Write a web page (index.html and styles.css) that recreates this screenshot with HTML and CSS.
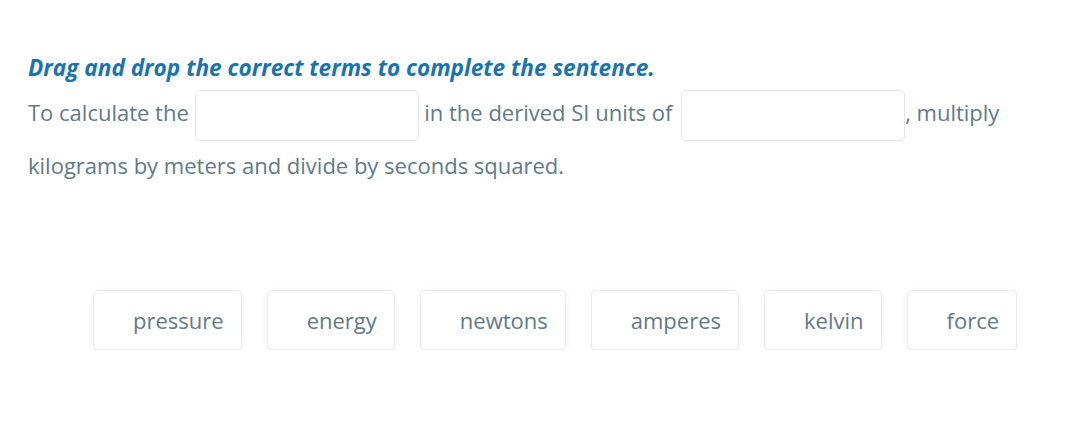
FILE: index.html
```html
<!DOCTYPE html>
<html>
<head>
<meta charset="utf-8">
<link rel="stylesheet" href="styles.css">
</head>
<body>
<div class="question">
  <h2 class="prompt">Drag and drop the correct terms to complete the sentence.</h2>
  <p class="sentence">To calculate the <span class="drop"></span> in the derived SI units of <span class="drop"></span>, multiply kilograms by meters and divide by seconds squared.</p>
  <div class="bank">
    <div class="chip">pressure</div>
    <div class="chip">energy</div>
    <div class="chip">newtons</div>
    <div class="chip">amperes</div>
    <div class="chip">kelvin</div>
    <div class="chip">force</div>
  </div>
</div>
</body>
</html>
```
FILE: styles.css
```css
html, body {
  margin: 0;
  padding: 0;
  background: #ffffff;
}
body {
  font-family: "Open Sans", "Liberation Sans", sans-serif;
  color: #637a86;
}
.question {
  padding: 53px 0 0 28px;
}
.prompt {
  margin: 0;
  font-size: 22.6px;
  font-weight: 700;
  font-style: italic;
  color: #1a73ad;
  line-height: 30px;
}
.sentence {
  margin: 5px 0 0 0;
  font-size: 22px;
  line-height: 49px;
  width: 1000px;
}
.drop {
  display: inline-block;
  width: 222px;
  height: 49px;
  border: 1px solid #e6e6e6;
  border-radius: 5px;
  vertical-align: middle;
  box-sizing: content-box;
}
.drop + .drop,
.sentence .drop:nth-of-type(2) {
  margin-left: 3px;
}
.bank {
  display: flex;
  gap: 25px;
  margin-top: 100px;
  padding-left: 65px;
}
.chip {
  height: 58px;
  display: flex;
  align-items: center;
  padding: 0 17px 0 39px;
  border: 1px solid #ececec;
  border-radius: 5px;
  box-shadow: 0 2px 8px rgba(0, 0, 0, 0.06);
  font-size: 22px;
  color: #637a86;
  background: #fff;
}
```
